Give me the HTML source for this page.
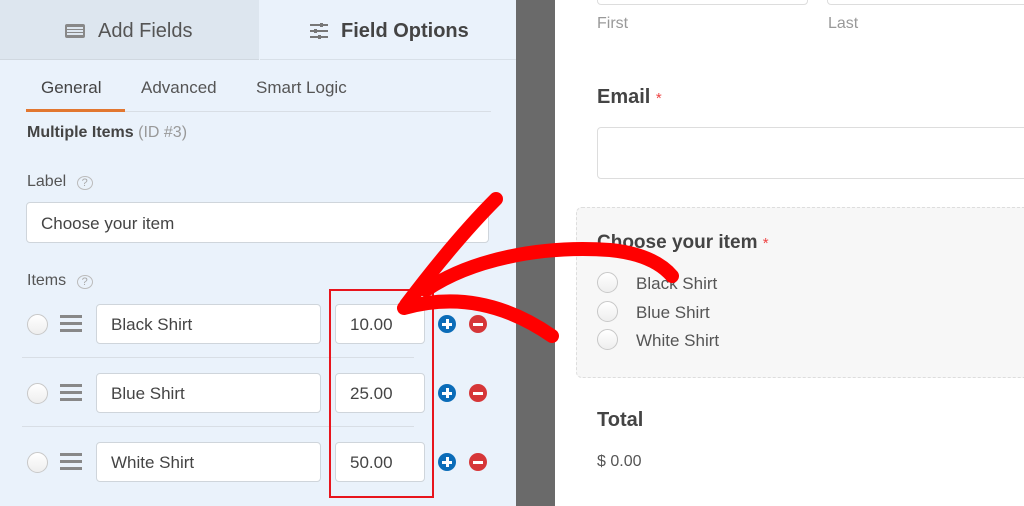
<!DOCTYPE html>
<html><head><meta charset="utf-8"><style>
*{box-sizing:border-box;margin:0;padding:0}
body{width:1024px;height:506px;overflow:hidden;position:relative;font-family:"Liberation Sans",sans-serif;background:#fff;color:#444}
.a{position:absolute}
.inp{position:absolute;background:#fff;border:1px solid #cfd5db;border-radius:4px;font-size:17px;color:#444;padding-left:14px;display:flex;align-items:center;padding-top:2px}
.rad{position:absolute;width:21px;height:21px;border-radius:50%;border:1px solid #c8c8c8;background:linear-gradient(#fff,#eee)}
.ham{position:absolute;width:22px;height:17px;border-top:3px solid #888;border-bottom:3px solid #888}
.ham:after{content:"";position:absolute;left:0;right:0;top:4px;height:3px;background:#888}
.ic{position:absolute;width:18px;height:18px;border-radius:50%}
.ic:before{content:"";position:absolute;left:4px;top:7.5px;width:10px;height:3px;background:#fff}
.pl:after{content:"";position:absolute;left:7.5px;top:4px;width:3px;height:10px;background:#fff}
</style></head><body>
<div class="a" style="left:0;top:0;width:516px;height:506px;background:#eaf2fb"></div>
<div class="a" style="left:0;top:0;width:259px;height:60px;background:#dde6ef;border-bottom:1px solid #d0d8e0"></div>
<div class="a" style="left:260px;top:0;width:256px;height:60px;border-bottom:1px solid #d8e0e8"></div>
<div class="a" style="left:65px;top:24px;width:20px;height:14px;border:2px solid #888;border-radius:2px;background:repeating-linear-gradient(#888 0 1px,#dde6ef 1px 3px)"></div>
<div class="a" style="left:98px;top:20px;font-size:20px;color:#555">Add Fields</div>
<svg class="a" style="left:309px;top:22px" width="20" height="18"><g stroke="#777" stroke-width="2"><path d="M1 3H19M1 9H19M1 15H19"/></g><g fill="#777"><rect x="11" y="1" width="3" height="4"/><rect x="5" y="7" width="3" height="4"/><rect x="9" y="13" width="3" height="4"/></g></svg>
<div class="a" style="left:341px;top:20px;font-size:20px;color:#444;font-weight:bold">Field Options</div>
<div class="a" style="left:41px;top:78px;font-size:17px;color:#444">General</div>
<div class="a" style="left:141px;top:78px;font-size:17px;color:#555">Advanced</div>
<div class="a" style="left:256px;top:78px;font-size:17px;color:#555">Smart Logic</div>
<div class="a" style="left:26px;top:111px;width:465px;height:1px;background:#d8dee5"></div>
<div class="a" style="left:26px;top:109px;width:99px;height:3px;background:#e27730"></div>
<div class="a" style="left:27px;top:124px;font-size:16px;font-weight:bold;color:#444">Multiple Items <span style="font-weight:normal;color:#999">(ID #3)</span></div>
<div class="a" style="left:27px;top:173px;font-size:16px;color:#555">Label <span style="color:#aaa;border:1px solid #bbb;border-radius:50%;font-size:11px;padding:0 4px;margin-left:6px">?</span></div>
<div class="inp" style="left:26px;top:202px;width:463px;height:41px">Choose your item</div>
<div class="a" style="left:27px;top:272px;font-size:16px;color:#555">Items <span style="color:#aaa;border:1px solid #bbb;border-radius:50%;font-size:11px;padding:0 4px;margin-left:6px">?</span></div>

<div class="rad" style="left:27px;top:314px"></div><div class="ham" style="left:60px;top:315px"></div>
<div class="inp" style="left:96px;top:304px;width:225px;height:40px">Black Shirt</div>
<div class="inp" style="left:335px;top:304px;width:90px;height:40px">10.00</div>
<div class="ic pl" style="left:438px;top:315px;background:#0b6cb8"></div><div class="ic" style="left:469px;top:315px;background:#d63638"></div>
<div class="a" style="left:22px;top:357px;width:392px;height:1px;background:#d8dee5"></div>
<div class="rad" style="left:27px;top:383px"></div><div class="ham" style="left:60px;top:384px"></div>
<div class="inp" style="left:96px;top:373px;width:225px;height:40px">Blue Shirt</div>
<div class="inp" style="left:335px;top:373px;width:90px;height:40px">25.00</div>
<div class="ic pl" style="left:438px;top:384px;background:#0b6cb8"></div><div class="ic" style="left:469px;top:384px;background:#d63638"></div>
<div class="a" style="left:22px;top:426px;width:392px;height:1px;background:#d8dee5"></div>
<div class="rad" style="left:27px;top:452px"></div><div class="ham" style="left:60px;top:453px"></div>
<div class="inp" style="left:96px;top:442px;width:225px;height:40px">White Shirt</div>
<div class="inp" style="left:335px;top:442px;width:90px;height:40px">50.00</div>
<div class="ic pl" style="left:438px;top:453px;background:#0b6cb8"></div><div class="ic" style="left:469px;top:453px;background:#d63638"></div>
<div class="a" style="left:329px;top:289px;width:105px;height:209px;border:2px solid #e8141c"></div>

<div class="a" style="left:516px;top:0;width:39px;height:506px;background:#6a6a6a"></div>
<div class="a" style="left:597px;top:-10px;width:211px;height:15px;border:1px solid #ddd;border-radius:4px"></div>
<div class="a" style="left:827px;top:-10px;width:210px;height:15px;border:1px solid #ddd;border-radius:4px"></div>
<div class="a" style="left:597px;top:15px;font-size:16px;color:#999">First</div>
<div class="a" style="left:828px;top:15px;font-size:16px;color:#999">Last</div>
<div class="a" style="left:597px;top:86px;font-size:20px;font-weight:bold;color:#444">Email <span style="color:#e44;font-weight:normal;font-size:15px">*</span></div>
<div class="a" style="left:597px;top:127px;width:440px;height:52px;border:1px solid #ddd;border-radius:4px"></div>
<div class="a" style="left:576px;top:207px;width:460px;height:171px;background:#f7f7f7;border:1px dashed #ddd;border-radius:6px"></div>
<div class="a" style="left:597px;top:232px;font-size:19px;font-weight:bold;color:#444">Choose your item <span style="color:#e44;font-weight:normal;font-size:15px">*</span></div>
<div class="rad" style="left:597px;top:272px"></div><div class="a" style="left:636px;top:274px;font-size:17px;color:#555">Black Shirt</div>
<div class="rad" style="left:597px;top:301px"></div><div class="a" style="left:636px;top:303px;font-size:17px;color:#555">Blue Shirt</div>
<div class="rad" style="left:597px;top:329px"></div><div class="a" style="left:636px;top:331px;font-size:17px;color:#555">White Shirt</div>
<div class="a" style="left:597px;top:409px;font-size:20px;font-weight:bold;color:#444">Total</div>
<div class="a" style="left:597px;top:453px;font-size:16px;color:#555">$ 0.00</div>

<svg class="a" style="left:0;top:0" width="1024" height="506">
<g fill="none" stroke="#f00" stroke-width="14" stroke-linecap="round" stroke-linejoin="round">
<path d="M496 199 C470 225 440 260 406 305"/>
<path d="M426 290 C470 260 540 245 610 250 C640 253 660 262 672 276"/>
<path d="M404 308 C450 295 500 300 552 336"/>
</g></svg>
</body></html>
